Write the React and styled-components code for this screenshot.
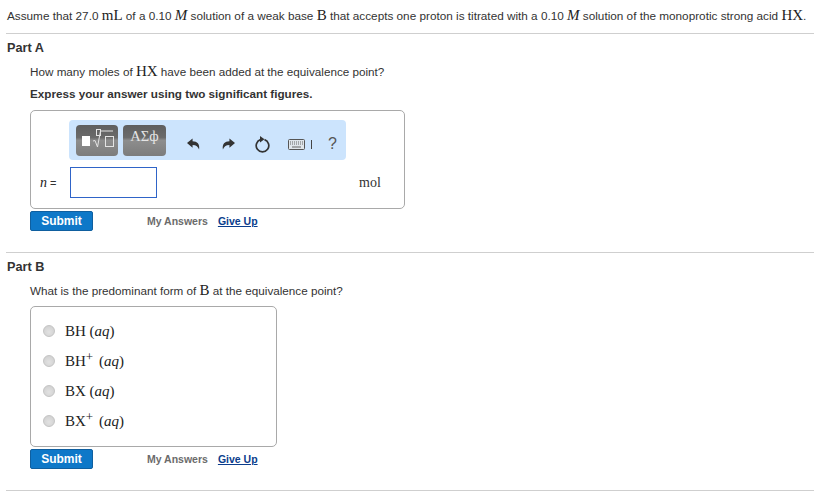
import React from 'react';
import styled, { createGlobalStyle } from 'styled-components';

const GlobalStyle = createGlobalStyle`
  html, body {
    margin: 0;
    padding: 0;
    background: #fff;
  }
  body {
    color: #333;
    font-family: "Liberation Sans", Arial, sans-serif;
    font-size: 12px;
  }
`;

const Page = styled.div`
  width: 814px;
  height: 492px;
  overflow: hidden;
`;

const Intro = styled.p`
  margin: 0;
  height: 33px;
  padding: 7px 0 0 7px;
  box-sizing: border-box;
  line-height: 16px;
  font-size: 11.75px;
  white-space: nowrap;
`;

const Rule = styled.hr`
  margin: 0 0 0 6px;
  border: 0;
  height: 1px;
  background: #cfcfcf;
`;

const Section = styled.section`
  height: ${p => p.$height}px;
  box-sizing: border-box;
  padding: 6px 0 0 7px;
`;

const PartTitle = styled.h2`
  margin: 0;
  font-size: 12.7px;
  line-height: 16px;
  font-weight: bold;
  color: #333;
`;

const Body = styled.div`
  padding-left: 23px;
`;

const Question = styled.p`
  margin: 7px 0 0;
  font-size: 11.7px;
  line-height: 16px;
  white-space: nowrap;
`;

const Note = styled.p`
  margin: 6px 0 0;
  font-size: 11.7px;
  line-height: 16px;
  font-weight: bold;
`;

const Math = styled.span`
  font-family: "Liberation Serif", "Times New Roman", serif;
  font-size: ${p => p.$size || 15}px;
  font-style: ${p => (p.$italic ? 'italic' : 'normal')};
  color: #222;
`;

const AnswerBox = styled.div`
  margin-top: 8px;
  width: 375px;
  height: 99px;
  box-sizing: border-box;
  border: 1px solid #a9a9a9;
  border-radius: 5px;
  padding: 9px 0 0 38px;
`;

const Toolbar = styled.div`
  width: 277px;
  height: 40px;
  box-sizing: border-box;
  padding: 5px 0 0 7px;
  display: flex;
  background: #cce4fd;
  border-radius: 4px;
`;

const PaletteButton = styled.div`
  width: ${p => p.$width}px;
  height: 31px;
  margin-right: 5px;
  box-sizing: border-box;
  display: flex;
  justify-content: center;
  background: linear-gradient(#5f5f5f 0, #6a6a6a 40%, #8d8d8d 50%, #7c7c7c 100%);
  border-radius: 4px;
  color: #e4e4e4;
  font-family: "Liberation Serif", serif;
  font-size: 14.5px;
  line-height: 22px;
`;

const ToolIcons = styled.div`
  display: flex;
  align-items: center;
  height: 38px;
  margin-left: 16px;
  color: #333;
`;

const ToolIcon = styled.svg`
  display: block;
  margin-right: ${p => p.$gap}px;
`;

const Help = styled.span`
  font-size: 16px;
  color: #555;
  margin-left: 16px;
`;

const AnswerRow = styled.div`
  display: flex;
  align-items: center;
  margin: 7px 0 0 -29px;
  height: 31px;
`;

const VarLabel = styled.span`
  width: 30px;
  font-size: 11px;
  color: #333;
  white-space: nowrap;
`;

const AnswerInput = styled.div`
  width: 87px;
  height: 31px;
  box-sizing: border-box;
  border: 1px solid #2f64c8;
`;

const Unit = styled.span`
  margin-left: 202px;
  font-family: "Liberation Serif", serif;
  font-size: 14px;
  color: #333;
`;

const Actions = styled.div`
  display: flex;
  align-items: center;
  margin-top: 2px;
  height: 20px;
`;

const SubmitButton = styled.button`
  width: 63px;
  height: 20px;
  padding: 0;
  border: 1px solid #0f5f9f;
  border-radius: 2px;
  background: #0e78c8;
  color: #fff;
  font-family: "Liberation Sans", sans-serif;
  font-size: 12px;
  font-weight: bold;
`;

const MyAnswers = styled.span`
  margin-left: 54px;
  font-size: 10.5px;
  font-weight: bold;
  color: #6b6b6b;
`;

const GiveUp = styled.a`
  margin-left: 10px;
  font-size: 10.5px;
  font-weight: bold;
  color: #0b3d8c;
  text-decoration: underline;
`;

const ChoiceBox = styled.div`
  margin-top: 7px;
  width: 247px;
  height: 141px;
  box-sizing: border-box;
  border: 1px solid #a9a9a9;
  border-radius: 5px;
  padding-top: 9px;
`;

const Choice = styled.div`
  display: flex;
  align-items: center;
  height: 30px;
  padding-left: 12px;
`;

const Radio = styled.span`
  width: 10px;
  height: 10px;
  margin-right: 10px;
  border-radius: 50%;
  border: 1px solid #c4c4c4;
  background: radial-gradient(circle at 50% 60%, #e2e2e2, #cdcdcd);
`;

const Sup = styled.sup`
  font-size: 13px;
  line-height: 0;
  font-weight: normal;
  vertical-align: 5px;
  margin-right: 2px;
`;

const choices = [
  ['BH', false],
  ['BH', true],
  ['BX', false],
  ['BX', true],
];

function Links() {
  return (
    <Actions>
      <SubmitButton>Submit</SubmitButton>
      <MyAnswers>My Answers</MyAnswers>
      <GiveUp>Give Up</GiveUp>
    </Actions>
  );
}

export default function App() {
  return (
    <Page>
      <GlobalStyle />
      <Intro>
        Assume that 27.0 <Math>mL</Math> of a 0.10 <Math $italic>M</Math> solution of a weak base <Math>B</Math> that
        accepts one proton is titrated with a 0.10 <Math $italic>M</Math> solution of the monoprotic strong acid{' '}
        <Math>HX</Math>.
      </Intro>
      <Rule />
      <Section $height={218}>
        <PartTitle>Part A</PartTitle>
        <Body>
          <Question>
            How many moles of <Math>HX</Math> have been added at the equivalence point?
          </Question>
          <Note>Express your answer using two significant figures.</Note>
          <AnswerBox>
            <Toolbar>
              <PaletteButton $width={42}>
                <svg width="42" height="31" viewBox="0 0 42 31" fill="none">
                  <rect x="6" y="11" width="8" height="10" fill="#fff" />
                  <rect x="20.5" y="4.5" width="4" height="6" stroke="#e4e4e4" />
                  <path d="M17 16l2-.5 2.5 6.5 3-16H37" stroke="#e4e4e4" />
                  <rect x="29.5" y="11.5" width="8" height="10" stroke="#e4e4e4" />
                </svg>
              </PaletteButton>
              <PaletteButton $width={43}>ΑΣф</PaletteButton>
              <ToolIcons>
                <ToolIcon $gap={22} width="13" height="12" viewBox="0 0 14 12">
                  <path d="M0 5L6 0v3c5 0 8 3 7 9-1-3-3-5-7-5v3z" fill="#333" />
                </ToolIcon>
                <ToolIcon $gap={20} width="13" height="12" viewBox="0 0 14 12">
                  <path d="M14 5L8 0v3C3 3 0 6 1 12c1-3 3-5 7-5v3z" fill="#333" />
                </ToolIcon>
                <ToolIcon $gap={18} width="15" height="17" viewBox="0 0 15 17" fill="none">
                  <path d="M9.5 3.6a6.3 6.3 0 1 1-4 0" stroke="#333" strokeWidth="1.7" />
                  <path d="M5 0l4.5 3.2L5 6.5z" fill="#333" />
                </ToolIcon>
                <ToolIcon $gap={6} width="17" height="11" viewBox="0 0 17 11">
                  <rect x="0.5" y="0.5" width="16" height="10" rx="1" fill="#dfe5ea" stroke="#555" />
                  <path d="M2 3h13M2 5h13" stroke="#666" strokeDasharray="1 1" />
                  <path d="M4 8h9" stroke="#666" />
                </ToolIcon>
                <ToolIcon $gap={0} width="1" height="9" viewBox="0 0 1 9">
                  <rect width="1" height="9" fill="#444" />
                </ToolIcon>
                <Help>?</Help>
              </ToolIcons>
            </Toolbar>
            <AnswerRow>
              <VarLabel>
                <Math $italic $size={14}>n</Math> =
              </VarLabel>
              <AnswerInput />
              <Unit>mol</Unit>
            </AnswerRow>
          </AnswerBox>
          <Links />
        </Body>
      </Section>
      <Rule />
      <Section $height={237}>
        <PartTitle>Part B</PartTitle>
        <Body>
          <Question>
            What is the predominant form of <Math>B</Math> at the equivalence point?
          </Question>
          <ChoiceBox>
            {choices.map(([name, charged], i) => (
              <Choice key={i}>
                <Radio />
                <Math $size={15}>
                  {name}
                  {charged && <Sup>+</Sup>} (<Math $italic $size={15}>aq</Math>)
                </Math>
              </Choice>
            ))}
          </ChoiceBox>
          <Links />
        </Body>
      </Section>
      <Rule />
    </Page>
  );
}
